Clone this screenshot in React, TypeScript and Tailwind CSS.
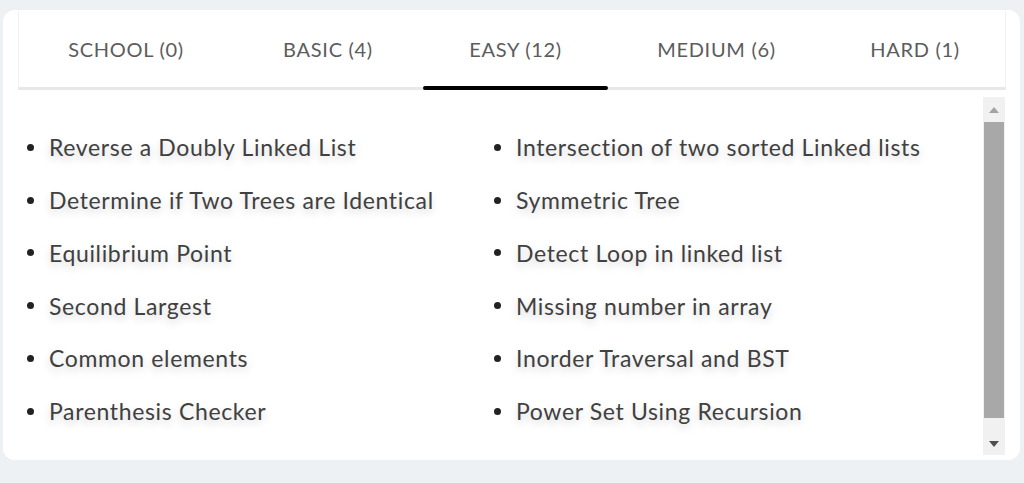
import React from "react";

const tabs = [
  { label: "SCHOOL (0)", active: false, w: "w-[214px]" },
  { label: "BASIC (4)", active: false, w: "w-[190px]" },
  { label: "EASY (12)", active: true, w: "w-[185px]" },
  { label: "MEDIUM (6)", active: false, w: "w-[217px]" },
  { label: "HARD (1)", active: false, w: "flex-1" },
];

const left = [
  "Reverse a Doubly Linked List",
  "Determine if Two Trees are Identical",
  "Equilibrium Point",
  "Second Largest",
  "Common elements",
  "Parenthesis Checker",
];
const right = [
  "Intersection of two sorted Linked lists",
  "Symmetric Tree",
  "Detect Loop in linked list",
  "Missing number in array",
  "Inorder Traversal and BST",
  "Power Set Using Recursion",
];

function Item({ text }: { text: string }) {
  return (
    <li className="flex items-center h-[52.8px]">
      <span className="w-[7px] h-[7px] rounded-full bg-[#222] ml-[9px] mr-[15px] shrink-0" />
      <span className="text-[23px] tracking-[0.65px] text-[#404040] [text-shadow:0_4px_8px_rgba(0,0,0,0.18)] whitespace-nowrap">
        {text}
      </span>
    </li>
  );
}

export default function App() {
  return (
    <div className="w-full h-[483px] bg-[#eef1f4] pt-[10px] pl-[3px] pr-[4px] font-['Lato',sans-serif]">
      <div className="bg-white rounded-[12px] h-[450px] px-[15px] flex flex-col">
        <div className="flex h-[80px] border-x border-[#f2f2f2] border-b-[3px] border-b-[#e8e8e8] mr-[-1px]">
          {tabs.map((t) => (
            <div key={t.label} className={`relative ${t.w} shrink-0 flex items-center justify-center`}>
              <span className="text-[20px] tracking-[0.7px] text-[#5c5c5c] whitespace-nowrap">{t.label}</span>
              {t.active && (
                <span className="absolute left-0 right-0 bottom-[-3px] h-[4px] rounded-full bg-black" />
              )}
            </div>
          ))}
        </div>
        <div className="flex flex-1 pt-[7px] pb-[5px]">
          <div className="flex-1 grid grid-cols-[467px_1fr] pt-[24px]">
            <ul>
              {left.map((t) => (
                <Item key={t} text={t} />
              ))}
            </ul>
            <ul>
              {right.map((t) => (
                <Item key={t} text={t} />
              ))}
            </ul>
          </div>
          <div className="w-[22px] bg-[#f1f1f1] flex flex-col items-center">
            <div className="h-[25px] flex items-center justify-center">
              <svg width="10" height="6" viewBox="0 0 10 6"><path d="M5 0L10 6H0Z" fill="#a3a3a3" /></svg>
            </div>
            <div className="w-[20px] h-[296px] bg-[#a8a8a8]" />
            <div className="flex-1 flex items-end justify-center pb-[8px]">
              <svg width="10" height="6" viewBox="0 0 10 6"><path d="M0 0H10L5 6Z" fill="#505050" /></svg>
            </div>
          </div>
        </div>
      </div>
    </div>
  );
}
